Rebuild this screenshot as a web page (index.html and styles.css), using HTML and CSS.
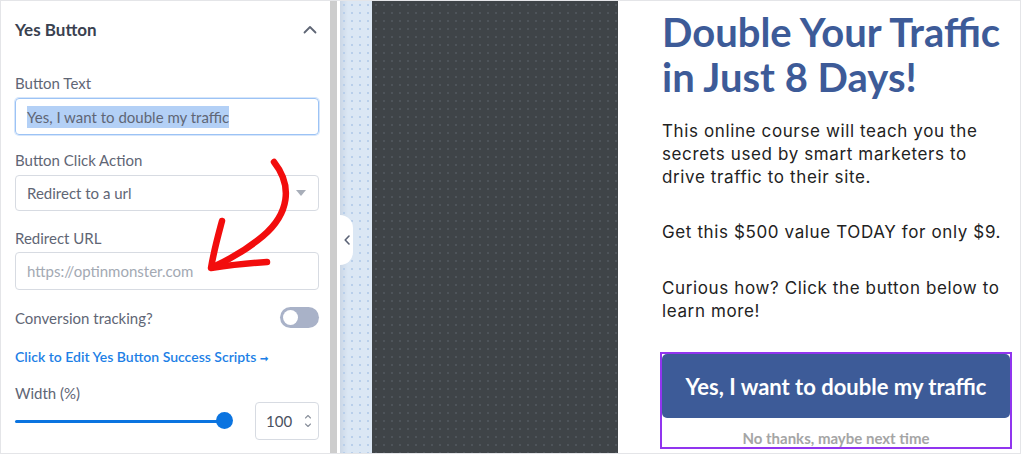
FILE: index.html
```html
<!DOCTYPE html>
<html lang="en">
<head>
    <meta charset="UTF-8">
    <title>Yes Button Settings</title>
    <link rel="stylesheet" href="styles.css">
</head>
<body>
    <div class="frame">
        <aside class="panel">
            <header class="panel-head">
                <h2 class="panel-title">Yes Button</h2>
                <svg class="panel-toggle" width="14" height="9" viewBox="0 0 14 9" fill="none" aria-hidden="true">
                    <path d="M1.5 7.5L7 2l5.5 5.5" stroke="#5f6675" stroke-width="1.8" stroke-linecap="round" stroke-linejoin="round"/>
                </svg>
            </header>

            <label class="field-label">Button Text</label>
            <div class="text-input is-focused"><span class="selected">Yes, I want to double my traffic</span></div>

            <label class="field-label">Button Click Action</label>
            <div class="text-input select">
                <span>Redirect to a url</span>
                <span class="caret"></span>
            </div>

            <label class="field-label loose">Redirect URL</label>
            <div class="text-input placeholder">https://optinmonster.com</div>

            <div class="toggle-row">
                <span class="field-label inline">Conversion tracking?</span>
                <span class="switch"><span class="knob"></span></span>
            </div>

            <a class="scripts-link" href="#">Click to Edit Yes Button Success Scripts <span class="link-arrow">&#10142;</span></a>

            <label class="field-label tight">Width (%)</label>
            <div class="slider-row">
                <div class="slider">
                    <div class="slider-track"></div>
                    <div class="slider-knob"></div>
                </div>
                <div class="number-input">
                    <span>100</span>
                    <svg width="8" height="16" viewBox="0 0 8 16" fill="none" aria-hidden="true">
                        <path d="M1.5 5L4 2.5 6.5 5M1.5 11L4 13.5 6.5 11" stroke="#8a909c" stroke-width="1.1" stroke-linecap="round" stroke-linejoin="round"/>
                    </svg>
                </div>
            </div>

            <!-- hand drawn annotation arrow -->
            <svg class="annotation" width="120" height="140" viewBox="190 150 120 140" fill="none" aria-hidden="true">
                <path d="M273 162 C292 186 288 214 262 236 C250 246 236 256 212 267" stroke="#f20d0d" stroke-width="6.5" stroke-linecap="round" stroke-linejoin="round"/>
                <path d="M221 221 C217 236 213 250 210 268 C230 265 248 263 266 262" stroke="#f20d0d" stroke-width="6.5" stroke-linecap="round" stroke-linejoin="round"/>
            </svg>
        </aside>

        <div class="scrollbar"></div>

        <div class="rail">
            <div class="rail-tab">
                <svg width="6" height="10" viewBox="0 0 6 10" fill="none" aria-hidden="true">
                    <path d="M5 1L1.2 5 5 9" stroke="#5a6275" stroke-width="1.6" stroke-linecap="round" stroke-linejoin="round"/>
                </svg>
            </div>
        </div>

        <div class="canvas"></div>

        <section class="preview">
            <h1 class="preview-title">Double Your Traffic in Just 8 Days!</h1>
            <p>This online course will teach you the secrets used by smart marketers to drive traffic to their site.</p>
            <p class="price">Get this $500 value TODAY for only $9.</p>
            <p>Curious how? Click the button below to learn more!</p>
            <div class="cta-box">
                <button class="cta-btn">Yes, I want to double my traffic</button>
                <div class="cta-no">No thanks, maybe next time</div>
            </div>
        </section>
    </div>
</body>
</html>
```

FILE: styles.css
```css
body {
    margin: 0;
    background: #fff;
    font-family: 'Lato', 'Noto Sans', sans-serif;
}
.frame {
    display: flex;
    width: 1019px;
    height: 452px;
    border: 1px solid #e4e5e8;
    overflow: hidden;
}
.panel {
    position: relative;
    width: 329px;
    flex-shrink: 0;
    box-sizing: border-box;
    padding: 0 11px 0 14px;
    background: #fff;
    color: #5f6675;
}
.panel-head {
    display: flex;
    align-items: center;
    justify-content: space-between;
    height: 57px;
    padding-right: 2px;
}
.panel-title {
    margin: 0;
    font-size: 17px;
    font-weight: 700;
    color: #3a4150;
}
.field-label {
    display: block;
    font-size: 15px;
    line-height: 18px;
    margin: 16px 0 6px;
    color: #5f6675;
}
.field-label.inline {
    margin: 0;
}
.field-label.loose {
    margin-top: 18px;
    margin-bottom: 5px;
}
.field-label.tight {
    margin: 18px 0 0;
}
.text-input {
    display: flex;
    align-items: center;
    height: 37px;
    box-sizing: border-box;
    padding: 0 11px;
    border: 1px solid #d7dbe2;
    border-radius: 4px;
    font-size: 15px;
    color: #5f6675;
}
.text-input.is-focused {
    border-color: #9cc3f5;
    box-shadow: 0 0 0 1px #d6e6fb;
}
.selected {
    background: #b3d0f6;
    padding: 2px 0;
}
.select {
    height: 36px;
    justify-content: space-between;
}
.caret {
    width: 0;
    height: 0;
    border-left: 5px solid transparent;
    border-right: 5px solid transparent;
    border-top: 6px solid #a8aeb9;
    margin-right: 1px;
}
.placeholder {
    height: 38px;
    color: #a3a9b3;
}
.toggle-row {
    display: flex;
    align-items: center;
    justify-content: space-between;
    margin-top: 17px;
}
.switch {
    position: relative;
    width: 39px;
    height: 21px;
    border-radius: 11px;
    background: #a9b2c8;
}
.knob {
    position: absolute;
    left: 3px;
    top: 3px;
    width: 15px;
    height: 15px;
    border-radius: 50%;
    background: #fff;
}
.scripts-link {
    display: block;
    margin-top: 21px;
    font-size: 14px;
    line-height: 16px;
    font-weight: 600;
    color: #1d7fe6;
    text-decoration: none;
}
.link-arrow {
    font-size: 10px;
}
.slider-row {
    display: flex;
    align-items: center;
    justify-content: space-between;
}
.slider {
    position: relative;
    width: 220px;
    height: 18px;
    display: flex;
    align-items: center;
}
.slider-track {
    width: 212px;
    height: 3px;
    border-radius: 2px;
    background: #0b74e0;
}
.slider-knob {
    position: absolute;
    left: 201px;
    top: 0;
    width: 17px;
    height: 17px;
    border-radius: 50%;
    background: #0b74e0;
}
.number-input {
    display: flex;
    align-items: center;
    justify-content: space-between;
    width: 64px;
    height: 38px;
    box-sizing: border-box;
    padding: 0 6px 0 10px;
    border: 1px solid #d7dbe2;
    border-radius: 4px;
    font-size: 15px;
    color: #4a5160;
}
.annotation {
    position: absolute;
    left: 190px;
    top: 149px;
}
.scrollbar {
    width: 7px;
    flex-shrink: 0;
    background: #cdcdcd;
    margin-right: 3px;
}
.rail {
    width: 32px;
    flex-shrink: 0;
    display: flex;
    align-items: center;
    background-color: #dbe7f4;
    background-image: radial-gradient(circle, #b9cfea 0.9px, transparent 1.2px), linear-gradient(90deg, #cbd7e6, rgba(219,231,244,0) 8px);
    background-size: 8px 8px, 100% 100%;
}
.rail-tab {
    width: 13px;
    height: 50px;
    margin-top: 26px;
    display: flex;
    align-items: center;
    justify-content: center;
    background: #fff;
    border-radius: 0 14px 14px 0;
}
.canvas {
    width: 246px;
    flex-shrink: 0;
    background-color: #3f4448;
    background-image: radial-gradient(circle, #4e545a 0.8px, transparent 1.1px);
    background-size: 8px 8px;
}
.preview {
    width: 402px;
    flex-shrink: 0;
    box-sizing: border-box;
    padding: 9px 10px 0 44px;
    background: #fff;
}
.preview-title {
    margin: 0 0 20px;
    font-family: 'Lato', sans-serif;
    font-size: 40px;
    line-height: 45px;
    font-weight: 700;
    color: #3d5b98;
}
.preview p {
    margin: 0 0 32px;
    font-family: 'Inter', 'Noto Sans', sans-serif;
    font-size: 17px;
    line-height: 23px;
    letter-spacing: 0.62px;
    color: #222;
}
.preview p.price {
    margin-bottom: 33px;
}
.cta-box {
    width: 352px;
    height: 97px;
    margin: -3px 0 0 -2px;
    box-sizing: border-box;
    border: 2px solid #9135ef;
}
.cta-btn {
    display: block;
    width: 100%;
    height: 64px;
    border: none;
    border-radius: 5px;
    background: #3d5b98;
    color: #fff;
    font-family: 'Lato', sans-serif;
    font-size: 22px;
    font-weight: 700;
}
.cta-no {
    text-align: center;
    margin-top: 12px;
    line-height: 17px;
    font-family: 'Lato', sans-serif;
    font-size: 15px;
    font-weight: 700;
    color: #a5a5a5;
}
```
